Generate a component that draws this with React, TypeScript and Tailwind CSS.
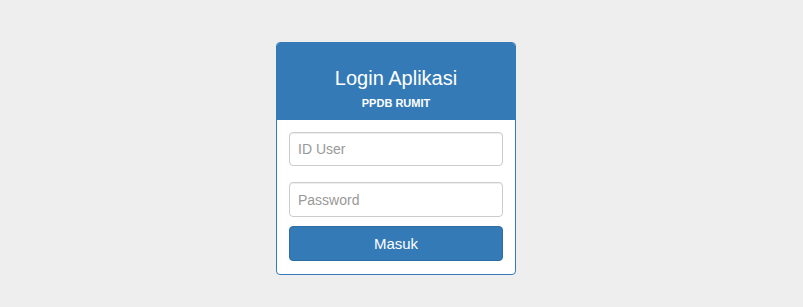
export default function App() {
  return (
    <div
      className="min-h-[307px] w-full bg-[#eeeeee] pt-[42px]"
      style={{ fontFamily: '"Liberation Sans", Arial, sans-serif' }}
    >
      <div className="ml-[276px] w-[240px] rounded-[4px] border border-[#337ab7] bg-white">
        <div className="flex h-[77px] flex-col items-center rounded-t-[3px] bg-[#337ab7] pt-[23px] text-white">
          <h3 className="text-[20px] leading-[24px]">Login Aplikasi</h3>
          <p className="mt-[6px] text-[11px] font-bold leading-[14px]">PPDB RUMIT</p>
        </div>
        <form className="flex flex-col px-[12px] pt-[12px] pb-[13px]">
          <input
            type="text"
            placeholder="ID User"
            className="h-[34px] w-full rounded-[4px] border border-[#cccccc] px-[8px] text-[14px] text-[#555] shadow-[inset_0_1px_1px_rgba(0,0,0,0.075)] outline-none placeholder:text-[#999]"
          />
          <input
            type="password"
            placeholder="Password"
            className="mt-[16px] h-[35px] w-full rounded-[4px] border border-[#cccccc] px-[8px] text-[14px] text-[#555] shadow-[inset_0_1px_1px_rgba(0,0,0,0.075)] outline-none placeholder:text-[#999]"
          />
          <button
            type="button"
            className="mt-[9px] h-[35px] w-full rounded-[4px] border border-[#2e6da4] bg-[#337ab7] pt-[1px] text-[15px] text-white"
          >
            Masuk
          </button>
        </form>
      </div>
    </div>
  );
}
